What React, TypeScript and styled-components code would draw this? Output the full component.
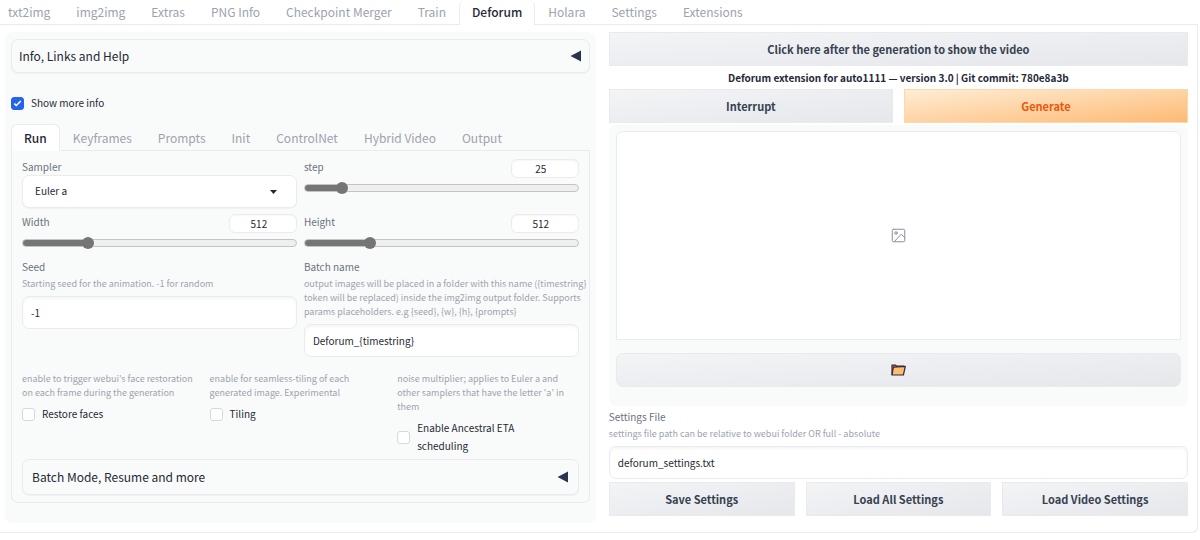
import React, { useState } from "react";
import styled, { createGlobalStyle, css } from "styled-components";

const GlobalStyle = createGlobalStyle`
  *, *::before, *::after { box-sizing: border-box; }
  body {
    margin: 0;
    background: #ffffff;
    color: #1f2937;
    font-family: "Source Sans Pro", "Noto Sans CJK SC", "Open Sans", sans-serif;
    font-size: 12px;
    line-height: 18px;
  }
  button, input, select { font: inherit; color: inherit; margin: 0; }
  p { margin: 0; }
`;

const line = "#e9ebee";
const panelBg = "#f9fbfa";

const Page = styled.div`
  padding-right: 2px;
`;

const TopTabs = styled.div`
  display: flex;
  height: 25px;
  padding-right: 2px;
  border-bottom: 1px solid ${line};
`;

const TopTab = styled.button<{ $active?: boolean }>`
  height: 25px;
  padding: 0 12px 2px;
  border: 1px solid transparent;
  border-width: 0 1px;
  background: none;
  color: #9ca3af;
  white-space: nowrap;
  &:first-child { padding-left: 7px; }
  ${(p) =>
    p.$active &&
    css`
      border-color: ${line};
      border-radius: 6px 6px 0 0;
      background: #ffffff;
      color: #1f2937;
      font-weight: 500;
    `}
`;

const Body = styled.main`
  display: grid;
  grid-template-columns: minmax(0, 51fr) minmax(0, 50fr);
  gap: 13px;
  padding: 7px 9px 9px 5px;
  border: 1px solid ${line};
  border-width: 0 1px 1px 0;
  border-radius: 0 0 6px 0;
`;

const Panel = styled.section`
  padding: 7px 6px 20px;
  border-radius: 7px;
  background: ${panelBg};
`;

const Accordion = styled.button<{ $inset?: boolean }>`
  display: flex;
  align-items: center;
  justify-content: space-between;
  width: 100%;
  height: ${(p) => (p.$inset ? 36 : 34)}px;
  padding: 0 ${(p) => (p.$inset ? 9 : 7)}px;
  border: 1px solid ${line};
  border-radius: 7px;
  background: ${panelBg};
  box-shadow: 0 1px 1px rgba(0, 0, 0, 0.04);
  text-align: left;
`;

const CheckLabel = styled.label`
  display: flex;
  align-items: center;
  gap: 7px;
  padding-right: 16px;
  font-size: 10px;
`;

const CheckBox = styled.input`
  appearance: none;
  flex: none;
  width: 13px;
  height: 13px;
  border: 1px solid #d5d9df;
  border-radius: 3px;
  background: #ffffff;
  &:checked {
    border-color: #2563eb;
    background: #2563eb;
  }
`;

const CheckWrap = styled.span`
  position: relative;
  display: flex;
  svg {
    position: absolute;
    inset: 0;
    pointer-events: none;
  }
`;

const MoreInfo = styled.div`
  padding: 21px 0 12px;
`;

const SubTabs = styled.div`
  display: flex;
  height: 27px;
  border-bottom: 1px solid ${line};
`;

const SubTab = styled.button<{ $active?: boolean }>`
  height: 27px;
  padding: 0 12px;
  border: 1px solid transparent;
  border-bottom: 0;
  background: none;
  color: #9ca3af;
  white-space: nowrap;
  ${(p) =>
    p.$active &&
    css`
      border-color: ${line};
      border-radius: 6px 6px 0 0;
      background: #ffffff;
      color: #1f2937;
      font-weight: 500;
    `}
`;

const RunPanel = styled.div`
  padding: 8px 10px 7px;
  border: 1px solid ${line};
  border-top: 0;
  border-radius: 0 0 7px 7px;
`;

const Columns = styled.div<{ $count: number; $gap: number; $height?: number }>`
  display: grid;
  grid-template-columns: repeat(${(p) => p.$count}, minmax(0, 1fr));
  gap: ${(p) => p.$gap}px;
  min-height: ${(p) => p.$height ?? 0}px;
`;

const Label = styled.label`
  display: block;
  color: #6b7280;
  font-size: 10px;
  line-height: 16px;
`;

const Hint = styled.p`
  color: #9ca3af;
  font-size: 9px;
  line-height: 14px;
`;

const FieldHint = styled(Hint)`
  margin: 2px 0 5px;
  white-space: pre-line;
`;

const WideHint = styled(FieldHint)`
  margin-right: -9px;
`;

const boxed = css`
  width: 100%;
  height: 33px;
  border: 1px solid ${line};
  border-radius: 7px;
  background: #ffffff;
  font-size: 10px;
`;

const TextBox = styled.input`
  ${boxed}
  display: block;
  padding: 0 8px;
  box-shadow: inset 0 2px 3px rgba(0, 0, 0, 0.04);
`;

const SelectWrap = styled.div`
  position: relative;
  svg {
    position: absolute;
    top: 15px;
    right: 20px;
    pointer-events: none;
  }
`;

const Select = styled.select`
  ${boxed}
  appearance: none;
  padding: 0 12px 1px;
  box-shadow: 0 1px 1px rgba(0, 0, 0, 0.04);
`;

const SliderHead = styled.div`
  display: flex;
  justify-content: space-between;
`;

const NumberBox = styled.input`
  width: 68px;
  height: 19px;
  padding: 0 14px 0 6px;
  border: 1px solid ${line};
  border-radius: 6px;
  background: #ffffff;
  box-shadow: inset 0 1px 2px rgba(0, 0, 0, 0.04);
  font-size: 10px;
  text-align: center;
`;

const Range = styled.input`
  appearance: none;
  display: block;
  width: 100%;
  height: 12px;
  margin-top: 4px;
  background: none;
  &::-webkit-slider-runnable-track {
    height: 8px;
    border: 1px solid #c4c4c4;
    border-radius: 4px;
    background: linear-gradient(to right, #757575 var(--fill), #efefef var(--fill)) border-box;
  }
  &::-webkit-slider-thumb {
    appearance: none;
    width: 12px;
    height: 12px;
    margin-top: -3px;
    border-radius: 50%;
    background: #757575;
  }
`;

const Options = styled.div`
  margin: 15px 0 4px;
`;

const OptionHint = styled(Hint)`
  min-height: 28px;
  margin-bottom: 5px;
`;

const OptionCell = styled.div`
  padding-right: 8px;
`;

const RightColumn = styled.section`
  display: flex;
  flex-direction: column;
`;

const Button = styled.button<{ $primary?: boolean; $round?: boolean }>`
  display: flex;
  align-items: center;
  justify-content: center;
  width: 100%;
  height: 34px;
  border: 1px solid ${(p) => (p.$primary ? "#fed7aa" : "#e8eaed")};
  border-radius: ${(p) => (p.$round ? 7 : 0)}px;
  background: ${(p) =>
    p.$primary
      ? "linear-gradient(to bottom right, #ffedd5, #fdba74)"
      : "linear-gradient(to bottom right, #f3f4f6, #e5e7eb)"};
  color: ${(p) => (p.$primary ? "#ea580c" : "#374151")};
  font-size: 11px;
  font-weight: 600;
`;

const Version = styled.p`
  padding: 3px 0 2px;
  font-size: 10px;
  font-weight: 600;
  text-align: center;
`;

const Gallery = styled.div`
  margin: 2px 0 3px;
  padding: 6px 7px 19px;
  border-radius: 7px;
  background: ${panelBg};
`;

const Preview = styled.div`
  display: flex;
  align-items: center;
  justify-content: center;
  height: 209px;
  margin-bottom: 13px;
  border: 1px solid ${line};
  border-radius: 7px 7px 0 0;
  background: #ffffff;
`;

const SettingsFile = styled.div`
  margin-bottom: 3px;
`;

const Triangle = () => (
  <svg width="12" height="12" viewBox="0 0 12 12" aria-hidden="true">
    <path d="M0.5 6 11 0.5v11z" fill="#2b3350" />
  </svg>
);

const PictureIcon = () => (
  <svg width="15" height="15" viewBox="0 0 24 24" fill="none" stroke="#8b8f9e" strokeWidth="1.6" strokeLinecap="round" strokeLinejoin="round" aria-hidden="true">
    <rect x="2" y="2" width="20" height="20" rx="2" />
    <circle cx="8" cy="8" r="2" />
    <path d="M22 15.5 16.5 10 5 22" />
  </svg>
);

const FolderIcon = () => (
  <svg width="15" height="12" viewBox="0 0 15 12" aria-hidden="true" strokeLinejoin="round" strokeWidth="1.2" stroke="#33263a">
    <path d="M1 11V1.2h3.6l1 1H12.6V3" fill="#f0883a" />
    <path d="M1 11 2.4 3.2 14.3 2.4 12.4 11z" fill="#fcbd6c" />
  </svg>
);

const Check = ({ label, on = false }: { label: string; on?: boolean }) => {
  const [checked, setChecked] = useState(on);
  return (
    <CheckLabel>
      <CheckWrap>
        <CheckBox type="checkbox" checked={checked} onChange={(e) => setChecked(e.target.checked)} />
        {checked && (
          <svg width="13" height="13" viewBox="0 0 16 16" aria-hidden="true">
            <path d="M12.2 4.8a1 1 0 0 1 0 1.4l-5 5a1 1 0 0 1-1.4 0l-2-2a1 1 0 0 1 1.4-1.4l1.3 1.3 4.3-4.3a1 1 0 0 1 1.4 0z" fill="#fff" />
          </svg>
        )}
      </CheckWrap>
      {label}
    </CheckLabel>
  );
};

type SliderProps = { id: string; label: string; start: number; min: number; max: number };

const Slider = ({ id, label, start, min, max }: SliderProps) => {
  const [value, setValue] = useState(start);
  const fill = `${((value - min) / (max - min)) * 100}%`;
  return (
    <div>
      <SliderHead>
        <Label htmlFor={id}>{label}</Label>
        <NumberBox aria-label={`${label} value`} inputMode="numeric" value={value} onChange={(e) => setValue(Number(e.target.value) || 0)} />
      </SliderHead>
      <Range id={id} type="range" min={min} max={max} value={value} onChange={(e) => setValue(Number(e.target.value))} style={{ "--fill": fill } as React.CSSProperties} />
    </div>
  );
};

const topTabs = ["txt2img", "img2img", "Extras", "PNG Info", "Checkpoint Merger", "Train", "Deforum", "Holara", "Settings", "Extensions"];
const subTabs = ["Run", "Keyframes", "Prompts", "Init", "ControlNet", "Hybrid Video", "Output"];

const batchHint = `output images will be placed in a folder with this name ({timestring}
token will be replaced) inside the img2img output folder. Supports
params placeholders. e.g {seed}, {w}, {h}, {prompts}`;

export default function App() {
  return (
    <Page>
      <GlobalStyle />
      <TopTabs role="tablist">
        {topTabs.map((t) => (
          <TopTab key={t} role="tab" aria-selected={t === "Deforum"} $active={t === "Deforum"}>{t}</TopTab>
        ))}
      </TopTabs>
      <Body>
        <Panel>
          <Accordion>Info, Links and Help<Triangle /></Accordion>
          <MoreInfo><Check label="Show more info" on /></MoreInfo>
          <SubTabs role="tablist">
            {subTabs.map((t) => (
              <SubTab key={t} role="tab" aria-selected={t === "Run"} $active={t === "Run"}>{t}</SubTab>
            ))}
          </SubTabs>
          <RunPanel>
            <Columns $count={2} $gap={7} $height={55}>
              <div>
                <Label htmlFor="sampler">Sampler</Label>
                <SelectWrap>
                  <Select id="sampler" defaultValue="Euler a">
                    <option>Euler a</option>
                  </Select>
                  <svg width="7" height="4" viewBox="0 0 7 4" aria-hidden="true">
                    <path d="M0 0h7L3.5 4z" fill="#1f2937" />
                  </svg>
                </SelectWrap>
              </div>
              <Slider id="step" label="step" start={25} min={1} max={200} />
            </Columns>
            <Columns $count={2} $gap={7} $height={45}>
              <Slider id="width" label="Width" start={512} min={64} max={2048} />
              <Slider id="height" label="Height" start={512} min={64} max={2048} />
            </Columns>
            <Columns $count={2} $gap={7}>
              <div>
                <Label htmlFor="seed">Seed</Label>
                <FieldHint>Starting seed for the animation. -1 for random</FieldHint>
                <TextBox id="seed" defaultValue="-1" />
              </div>
              <div>
                <Label htmlFor="batch">Batch name</Label>
                <WideHint>{batchHint}</WideHint>
                <TextBox id="batch" defaultValue="Deforum_{timestring}" />
              </div>
            </Columns>
            <Options>
              <Columns $count={3} $gap={6}>
                <OptionCell>
                  <OptionHint>enable to trigger webui's face restoration on each frame during the generation</OptionHint>
                  <Check label="Restore faces" />
                </OptionCell>
                <OptionCell>
                  <OptionHint>enable for seamless-tiling of each generated image. Experimental</OptionHint>
                  <Check label="Tiling" />
                </OptionCell>
                <OptionCell>
                  <OptionHint>noise multiplier; applies to Euler a and other samplers that have the letter 'a' in them</OptionHint>
                  <Check label="Enable Ancestral ETA scheduling" />
                </OptionCell>
              </Columns>
            </Options>
            <Accordion $inset>Batch Mode, Resume and more<Triangle /></Accordion>
          </RunPanel>
        </Panel>
        <RightColumn>
          <Button>Click here after the generation to show the video</Button>
          <Version>Deforum extension for auto1111 — version 3.0 | Git commit: 780e8a3b</Version>
          <Columns $count={2} $gap={11}>
            <Button>Interrupt</Button>
            <Button $primary>Generate</Button>
          </Columns>
          <Gallery>
            <Preview><PictureIcon /></Preview>
            <Button $round aria-label="Open output folder"><FolderIcon /></Button>
          </Gallery>
          <SettingsFile>
            <Label htmlFor="settings">Settings File</Label>
            <FieldHint>settings file path can be relative to webui folder OR full - absolute</FieldHint>
            <TextBox id="settings" defaultValue="deforum_settings.txt" />
          </SettingsFile>
          <Columns $count={3} $gap={11}>
            <Button>Save Settings</Button>
            <Button>Load All Settings</Button>
            <Button>Load Video Settings</Button>
          </Columns>
        </RightColumn>
      </Body>
    </Page>
  );
}
